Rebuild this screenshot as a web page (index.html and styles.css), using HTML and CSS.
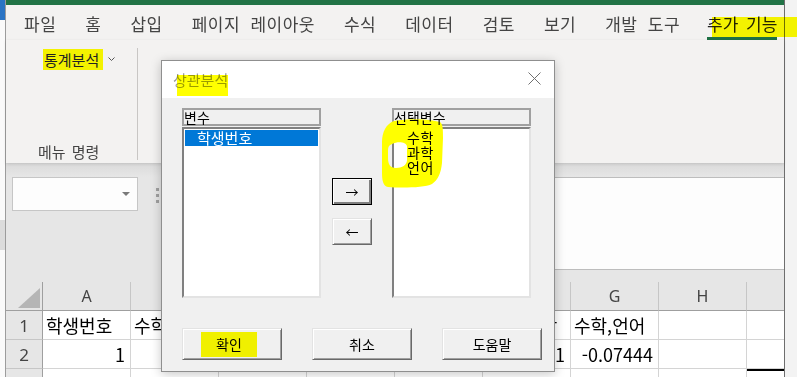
FILE: index.html
```html
<!DOCTYPE html>
<html lang="ko">
<head>
  <meta charset="UTF-8" />
  <title>상관분석</title>
  <link rel="stylesheet" href="styles.css">
</head>
<body>
  <div class="screen">
    <div class="behind-left">
      <div class="behind-blue"></div>
      <div class="behind-gray"></div>
    </div>

    <div class="excel">
      <div class="title-strip"></div>

      <nav class="tabs">
        <span class="tab">파일</span>
        <span class="tab">홈</span>
        <span class="tab">삽입</span>
        <span class="tab">페이지 레이아웃</span>
        <span class="tab">수식</span>
        <span class="tab">데이터</span>
        <span class="tab">검토</span>
        <span class="tab">보기</span>
        <span class="tab">개발 도구</span>
        <span class="tab tab-active">추가 기능<span class="hl-over hl-tab"></span></span>
      </nav>

      <div class="ribbon">
        <div class="group">
          <div class="menu-btn">
            <span class="menu-text">통계분석</span>
            <svg class="chevron" width="7" height="5" viewBox="0 0 7 5"><polyline points="0.5,0.5 3.5,3.5 6.5,0.5" fill="none" stroke="#555" stroke-width="1"/></svg>
          </div>
          <div class="group-label">메뉴 명령</div>
        </div>
      </div>

      <div class="formula-row">
        <div class="namebox"><span class="drop"></span></div>
        <div class="grip"><i></i><i></i><i></i></div>
        <div class="formula-input"></div>
      </div>

      <div class="sheet">
        <div class="grid">
          <div class="corner"></div>
          <div class="hd">A</div>
          <div class="hd">B</div>
          <div class="hd">C</div>
          <div class="hd">D</div>
          <div class="hd">E</div>
          <div class="hd">F</div>
          <div class="hd">G</div>
          <div class="hd">H</div>
          <div class="hd"></div>

          <div class="rh">1</div>
          <div class="c">학생번호</div>
          <div class="c">수학</div>
          <div class="c"></div>
          <div class="c"></div>
          <div class="c"></div>
          <div class="c">수학,과학</div>
          <div class="c">수학,언어</div>
          <div class="c"></div>
          <div class="c"></div>

          <div class="rh">2</div>
          <div class="c num">1</div>
          <div class="c"></div>
          <div class="c"></div>
          <div class="c"></div>
          <div class="c"></div>
          <div class="c num">1</div>
          <div class="c num">-0.07444</div>
          <div class="c"></div>
          <div class="c"></div>

          <div class="rh"></div>
          <div class="c"></div>
          <div class="c"></div>
          <div class="c"></div>
          <div class="c"></div>
          <div class="c"></div>
          <div class="c"></div>
          <div class="c"></div>
          <div class="c"></div>
          <div class="c active-cell"></div>
        </div>
      </div>
    </div>

    <div class="behind-right"></div>

    <!-- dialog sits over the sheet -->
    <div class="dialog">
      <div class="dlg-title">
        <span class="dlg-caption">상관분석<span class="hl-over hl-caption"></span></span>
        <svg class="close" width="13" height="13" viewBox="0 0 13 13">
          <line x1="0.5" y1="0.5" x2="12.5" y2="12.5" stroke="#707070" stroke-width="1"/>
          <line x1="12.5" y1="0.5" x2="0.5" y2="12.5" stroke="#707070" stroke-width="1"/>
        </svg>
      </div>

      <div class="dlg-body">
        <div class="dlg-main">
          <div class="list-col">
            <div class="list-label"><span>변수</span></div>
            <div class="listbox">
              <div class="opt sel">학생번호</div>
            </div>
          </div>

          <div class="movers">
            <div class="mv mv-default">→</div>
            <div class="mv">←</div>
          </div>

          <div class="list-col">
            <svg class="marker" width="64" height="72" viewBox="0 0 64 72">
              <path fill="#ffff00" fill-rule="evenodd" d="M14 3 C30 0 50 1 60 4 C63 6 63 12 63 20 L62 45 C61 55 58 62 52 66 C44 70 20 70 8 69 C3 68 2 62 2 55 L2 24 C2 14 6 6 14 3 Z M12 26 C18 23 26 24 27 28 L27 42 C27 47 22 50 16 50 C10 50 8 46 8 40 L8 32 C8 29 9 27 12 26 Z"/>
            </svg>
            <div class="list-label"><span>선택변수</span></div>
            <div class="listbox">
              <div class="opt">수학</div>
              <div class="opt">과학</div>
              <div class="opt">언어</div>
            </div>
          </div>
        </div>

        <div class="dlg-buttons">
          <div class="btn"><span class="btn-mark">확인</span></div>
          <div class="btn">취소</div>
          <div class="btn">도움말</div>
        </div>
      </div>
    </div>
  </div>
</body>
</html>
```

FILE: styles.css
```css
* {
  box-sizing: border-box;
}

body {
  margin: 0;
  width: 797px;
  height: 377px;
  overflow: hidden;
  background-color: #f4f4f4;
  font-family: "Noto Sans CJK KR", "Noto Sans", sans-serif;
}

.screen {
  position: relative;
  display: flex;
  height: 377px;
}

/* windows behind excel */
.behind-left {
  width: 5px;
  flex: none;
  display: flex;
  flex-direction: column;
  background-color: #fafafa;
}

.behind-blue {
  height: 20px;
  background-color: #2a74c4;
}

.behind-gray {
  height: 30px;
  margin-top: 200px;
  background-color: #dcdcdc;
}

.behind-right {
  flex: 1;
  background-color: #f3f3f3;
}

.excel {
  width: 780px;
  flex: none;
  display: flex;
  flex-direction: column;
  border-left: 1px solid #9c9c9c;
  border-right: 1px solid #6e6e6e;
  background-color: #e6e6e6;
}

.title-strip {
  height: 5px;
  background-color: #217346;
}

/* highlighter marks */
.hl-over {
  position: absolute;
  background-color: #ffff00;
  mix-blend-mode: multiply;
}

.tabs {
  height: 35px;
  display: flex;
  gap: 29px;
  padding-left: 18px;
  background-color: #f3f2f1;
  font-size: 17px;
  color: #444;
  letter-spacing: 0.5px;
  word-spacing: 5px;
}

.tab {
  position: relative;
  line-height: 38px;
  white-space: nowrap;
}

.tab-active {
  color: #222;
  margin-left: -2px;
  letter-spacing: 0;
  word-spacing: 3px;
}

.tab-active::after {
  content: "";
  position: absolute;
  left: 0;
  right: 0;
  bottom: 0;
  height: 3px;
  background-color: #1e7145;
}

.hl-tab {
  left: 5px;
  top: 12px;
  width: 85px;
  height: 20px;
}

.ribbon {
  height: 123px;
  display: flex;
  background-color: #f3f2f1;
  position: relative;
  box-shadow: 0 1px 3px rgba(0, 0, 0, 0.12);
}

.group {
  width: 132px;
  margin: 8px 0 3px;
  padding-top: 1px;
  border-right: 1px solid #c8c6c4;
  display: flex;
  flex-direction: column;
  justify-content: space-between;
  align-items: flex-start;
}

.menu-btn {
  margin-left: 37px;
  display: flex;
  align-items: center;
  font-size: 15px;
  color: #222;
}

.menu-text {
  background-color: #f3f200;
  line-height: 21px;
  padding: 0 4px 0 1px;
}

.chevron {
  margin-left: 5px;
}

.group-label {
  margin-left: 32px;
  font-size: 15px;
  line-height: 17px;
  color: #444;
  word-spacing: 2px;
}

.formula-row {
  height: 107px;
  padding-top: 14px;
  display: flex;
  align-items: flex-start;
  background: linear-gradient(#dadada, #e6e6e6 14px);
}

.namebox {
  width: 126px;
  height: 34px;
  margin-left: 6px;
  border: 1px solid #c6c6c6;
  background-color: #fdfdfd;
  display: flex;
  align-items: center;
  justify-content: flex-end;
  padding-right: 7px;
}

.drop {
  width: 0;
  height: 0;
  border-left: 4px solid transparent;
  border-right: 4px solid transparent;
  border-top: 4px solid #7a7a7a;
}

.grip {
  margin: 11px 0 0 18px;
  display: flex;
  flex-direction: column;
  gap: 3px;
}

.grip i {
  display: block;
  width: 3px;
  height: 3px;
  background-color: #a0a0a0;
}

.formula-input {
  flex: 1;
  height: 93px;
  margin-left: 10px;
  border-top: 1px solid #bdbdbd;
  border-bottom: 1px solid #bdbdbd;
  background-color: #fdfdfd;
}

.sheet {
  flex: 1;
  overflow: hidden;
  padding-top: 12px;
}

.grid {
  display: grid;
  grid-template-columns: 37px repeat(9, 88px);
  grid-auto-rows: 29px;
}

.corner,
.hd,
.rh {
  background-color: #e6e6e6;
  color: #444;
  display: flex;
  align-items: center;
  justify-content: center;
}

.corner {
  border-right: 1px solid #9f9f9f;
  border-bottom: 1px solid #9f9f9f;
  justify-content: flex-end;
  align-items: flex-end;
  padding: 0 2px 2px 0;
}

.corner::after {
  content: "";
  width: 22px;
  height: 20px;
  background-color: #b5b5b5;
  clip-path: polygon(100% 0, 100% 100%, 0 100%);
}

.hd {
  font-family: "Noto Sans", sans-serif;
  font-size: 16px;
  border-right: 1px solid #c6c6c6;
  border-bottom: 1px solid #9f9f9f;
}

.rh {
  font-family: "Noto Sans", sans-serif;
  font-size: 17px;
  border-right: 1px solid #9f9f9f;
  border-bottom: 1px solid #c6c6c6;
}

.c {
  background-color: #fff;
  border-right: 1px solid #d4d4d4;
  border-bottom: 1px solid #d4d4d4;
  font-size: 18px;
  line-height: 28px;
  padding: 0 3px;
  white-space: nowrap;
  overflow: hidden;
  color: #000;
}

.num {
  text-align: right;
  padding-right: 5px;
}

.active-cell {
  box-shadow: inset 0 2px 0 #000;
}

/* 상관분석 dialog */
.dialog {
  position: absolute;
  left: 161px;
  top: 60px;
  width: 394px;
  height: 312px;
  border: 1px solid #8f8f8f;
  background-color: #f0f0f0;
  box-shadow: 0 2px 10px rgba(0, 0, 0, 0.22);
  font-size: 15px;
  color: #000;
}

.dlg-title {
  height: 37px;
  background-color: #fff;
  display: flex;
  align-items: center;
  justify-content: space-between;
  padding: 0 13px 0 11px;
  color: #9b9b9b;
}

.dlg-caption {
  position: relative;
  line-height: 20px;
}

.hl-caption {
  left: 4px;
  top: 5px;
  width: 51px;
  height: 21px;
}

.close {
  margin-top: -2px;
}

.dlg-body {
  padding: 10px 0 0 20px;
}

.dlg-main {
  display: flex;
  align-items: flex-start;
}

.list-col {
  position: relative;
  width: 139px;
}

.list-label {
  height: 18px;
  border: 2px solid #a0a0a0;
  font-size: 14px;
  line-height: 14px;
  white-space: nowrap;
}

.list-label span {
  position: relative;
  z-index: 2;
}

.listbox {
  height: 171px;
  margin-top: 1px;
  padding: 1px;
  border: 2px solid;
  border-color: #808080 #e3e3e3 #e3e3e3 #808080;
  background-color: #fff;
}

.opt {
  position: relative;
  z-index: 2;
  height: 15px;
  font-size: 14px;
  line-height: 15px;
  letter-spacing: 0.5px;
  padding-left: 12px;
  white-space: nowrap;
}

.opt.sel {
  height: 16px;
  font-size: 15px;
  line-height: 16px;
  letter-spacing: 0;
  background-color: #0078d7;
  color: #fff;
}

.marker {
  position: absolute;
  left: -12px;
  top: 10px;
  z-index: 1;
}

.movers {
  width: 40px;
  margin: 0 20px 0 11px;
  padding-top: 70px;
  display: flex;
  flex-direction: column;
  gap: 13px;
}

.mv,
.btn {
  display: flex;
  align-items: center;
  justify-content: center;
  background-color: #f0f0f0;
  border: 1px solid;
  border-color: #e3e3e3 #696969 #696969 #e3e3e3;
  box-shadow: inset 1px 1px 0 #fff, inset -1px -1px 0 #a0a0a0;
}

.mv {
  height: 27px;
  font-size: 13px;
}

.mv-default {
  border-color: #000;
  box-shadow: inset 1px 1px 0 #fff, inset -2px -2px 0 #808080;
}

.dlg-buttons {
  margin-top: 30px;
  display: flex;
  gap: 30px;
}

.btn {
  width: 100px;
  height: 32px;
  font-size: 14px;
}

.btn-mark {
  background-color: #f0f000;
  line-height: 17px;
  padding: 4px 15px;
  margin-right: 6px;
}
```
